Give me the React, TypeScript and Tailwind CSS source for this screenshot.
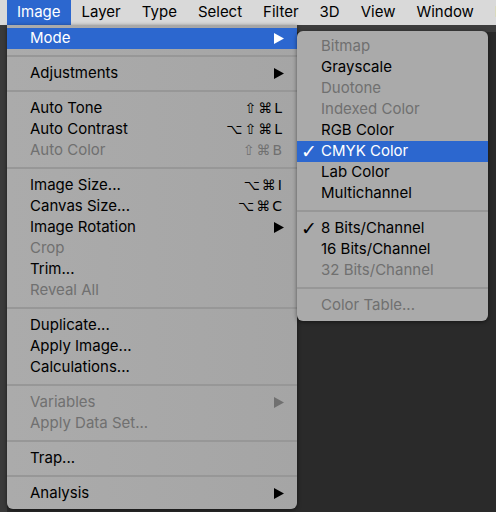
import React from "react"

type Item =
  | { sep: true }
  | { label: string; key?: string; sub?: boolean; off?: boolean; hi?: boolean; check?: boolean }

const MAIN: Item[] = [
  { label: "Mode", sub: true, hi: true },
  { sep: true },
  { label: "Adjustments", sub: true },
  { sep: true },
  { label: "Auto Tone", key: "⇧⌘L" },
  { label: "Auto Contrast", key: "⌥⇧⌘L" },
  { label: "Auto Color", key: "⇧⌘B", off: true },
  { sep: true },
  { label: "Image Size...", key: "⌥⌘I" },
  { label: "Canvas Size...", key: "⌥⌘C" },
  { label: "Image Rotation", sub: true },
  { label: "Crop", off: true },
  { label: "Trim..." },
  { label: "Reveal All", off: true },
  { sep: true },
  { label: "Duplicate..." },
  { label: "Apply Image..." },
  { label: "Calculations..." },
  { sep: true },
  { label: "Variables", sub: true, off: true },
  { label: "Apply Data Set...", off: true },
  { sep: true },
  { label: "Trap..." },
  { sep: true },
  { label: "Analysis", sub: true },
]

const MODE: Item[] = [
  { label: "Bitmap", off: true },
  { label: "Grayscale" },
  { label: "Duotone", off: true },
  { label: "Indexed Color", off: true },
  { label: "RGB Color" },
  { label: "CMYK Color", hi: true, check: true },
  { label: "Lab Color" },
  { label: "Multichannel" },
  { sep: true },
  { label: "8 Bits/Channel", check: true },
  { label: "16 Bits/Channel" },
  { label: "32 Bits/Channel", off: true },
  { sep: true },
  { label: "Color Table...", off: true },
]

const BAR = ["Image", "Layer", "Type", "Select", "Filter", "3D", "View", "Window", "Help"]

function Arrow({ color }: { color: string }) {
  return (
    <svg width="10" height="11" viewBox="0 0 10 11" className="shrink-0">
      <polygon points="0,0 10,5.5 0,11" fill={color} />
    </svg>
  )
}

function Row({ it, indent }: { it: Item; indent: string }) {
  if ("sep" in it) return <div className="my-[6px] h-[2px] bg-[#979797]" />
  const color = it.hi ? "text-white" : it.off ? "text-[#707070]" : "text-black"
  return (
    <div className={`flex h-[21px] items-center pr-[13px] ${it.hi ? "bg-[#2c67cf]" : ""} ${color}`}>
      <span className={`flex ${indent} shrink-0 justify-center font-['DejaVu_Sans',sans-serif] text-[19px] leading-none`}>
        {it.check ? "✓" : ""}
      </span>
      <span className="flex-1 whitespace-nowrap">{it.label}</span>
      {it.key && <span className="font-['DejaVu_Sans',sans-serif] text-[14px] tracking-[2px]">{it.key}</span>}
      {it.sub && <Arrow color={it.hi ? "#ffffff" : it.off ? "#707070" : "#000000"} />}
    </div>
  )
}

export default function App() {
  return (
    <div className="relative flex h-[512px] w-[496px] flex-col overflow-hidden bg-[#2a2a2a] font-['Inter','Liberation_Sans',sans-serif] text-[15px]">
      <div className="flex h-[25px] shrink-0 items-center bg-[#d9d9d9] pl-[7px]">
        {BAR.map((b, i) => (
          <div key={b}
            className={`flex h-full items-center px-[10px] ${i === 0 ? "bg-[#2c67cf] text-white" : "ml-[1px] text-black"}`}>
            {b}
          </div>
        ))}
      </div>

      <div className="flex flex-1">
        <div className="w-[7px] bg-[#3a3a3a]" />
        <div className="flex flex-1 flex-col">
          <div className="h-[7px] bg-[#3d3d3d]" />
          <div className="flex-1 bg-[#2a2a2a]" />
        </div>
      </div>

      <div className="absolute left-[7px] top-[25px] w-[290px] rounded-b-[6px] bg-gradient-to-r from-[#ababab] to-[#a5a5a5] pb-[5px] pt-[3px] shadow-[0_1px_4px_rgba(0,0,0,0.5)]">
        {MAIN.map((it, i) => <Row key={i} it={it} indent="w-[23px]" />)}
      </div>

      <div className="absolute left-[297px] top-[31px] w-[191px] rounded-[6px] bg-[#aaaaaa] pb-[5px] pt-[5px] shadow-[0_1px_4px_rgba(0,0,0,0.5)]">
        {MODE.map((it, i) => <Row key={i} it={it} indent="w-[24px]" />)}
      </div>
    </div>
  )
}
